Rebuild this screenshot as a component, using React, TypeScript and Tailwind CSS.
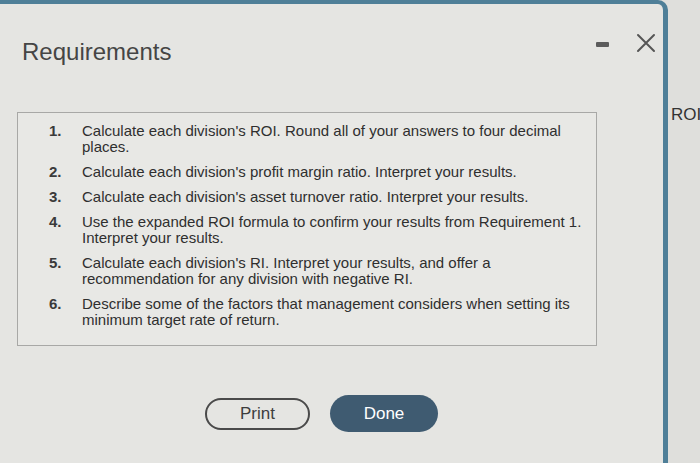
import React from "react";

const items: { n: string; lines: string[] }[] = [
  { n: "1.", lines: ["Calculate each division's ROI. Round all of your answers to four decimal", "places."] },
  { n: "2.", lines: ["Calculate each division's profit margin ratio. Interpret your results."] },
  { n: "3.", lines: ["Calculate each division's asset turnover ratio. Interpret your results."] },
  { n: "4.", lines: ["Use the expanded ROI formula to confirm your results from Requirement 1.", "Interpret your results."] },
  { n: "5.", lines: ["Calculate each division's RI. Interpret your results, and offer a", "recommendation for any division with negative RI."] },
  { n: "6.", lines: ["Describe some of the factors that management considers when setting its", "minimum target rate of return."] },
];

export default function App() {
  return (
    <div
      className="flex h-[463px] w-[700px] overflow-hidden bg-[#dfdfdc]"
      style={{ fontFamily: '"Liberation Sans", Arial, sans-serif' }}
    >
      {/* Dialog */}
      <div className="flex h-[463px] w-[668px] shrink-0 flex-col rounded-tr-[10px] border-t-[4px] border-r-[5px] border-[#4f7f98] bg-[#e5e5e2]">
        {/* Header */}
        <div className="flex items-start justify-between pt-[32px] pl-[22px] pr-[6px]">
          <h1 className="text-[24px] leading-[32px] text-[#454545]">Requirements</h1>
          <div className="flex items-start gap-[26px]">
            <span className="mt-[6px] block h-[5px] w-[13px] rounded-[1px] bg-[#5c5c5c]" />
            <svg width="22" height="22" viewBox="0 0 22 22" className="-mt-[4px]">
              <path d="M3 3 L19 19 M19 3 L3 19" stroke="#555" strokeWidth="2" strokeLinecap="round" fill="none" />
            </svg>
          </div>
        </div>

        {/* Requirement list */}
        <div className="ml-[17px] mt-[44px] h-[234px] w-[580px] border border-[#a8a8a6] bg-[#e8e8e5] pl-[31px] pt-[10px]">
          <ol className="flex flex-col gap-[9px] text-[15px] leading-[16px] text-[#2f2f2f]">
            {items.map(it => (
              <li key={it.n} className="flex">
                <span className="w-[33px] shrink-0 font-bold text-[#3a3a3a]">{it.n}</span>
                <span className="flex flex-col">
                  {it.lines.map(l => (
                    <span key={l}>{l}</span>
                  ))}
                </span>
              </li>
            ))}
          </ol>
        </div>

        {/* Buttons */}
        <div className="ml-[205px] mt-[49px] flex items-center gap-[20px]">
          <button className="h-[32px] w-[105px] rounded-full border-2 border-[#4a4a4a] text-[17px] text-[#3d3d3d]">
            Print
          </button>
          <button className="h-[37px] w-[108px] rounded-full bg-[#3f5b71] text-[17px] text-white">
            Done
          </button>
        </div>
      </div>

      {/* Background sliver */}
      <div className="relative flex-1">
        <span className="absolute left-[3px] top-[102px] text-[17px] text-[#333]">ROI</span>
      </div>
    </div>
  );
}
